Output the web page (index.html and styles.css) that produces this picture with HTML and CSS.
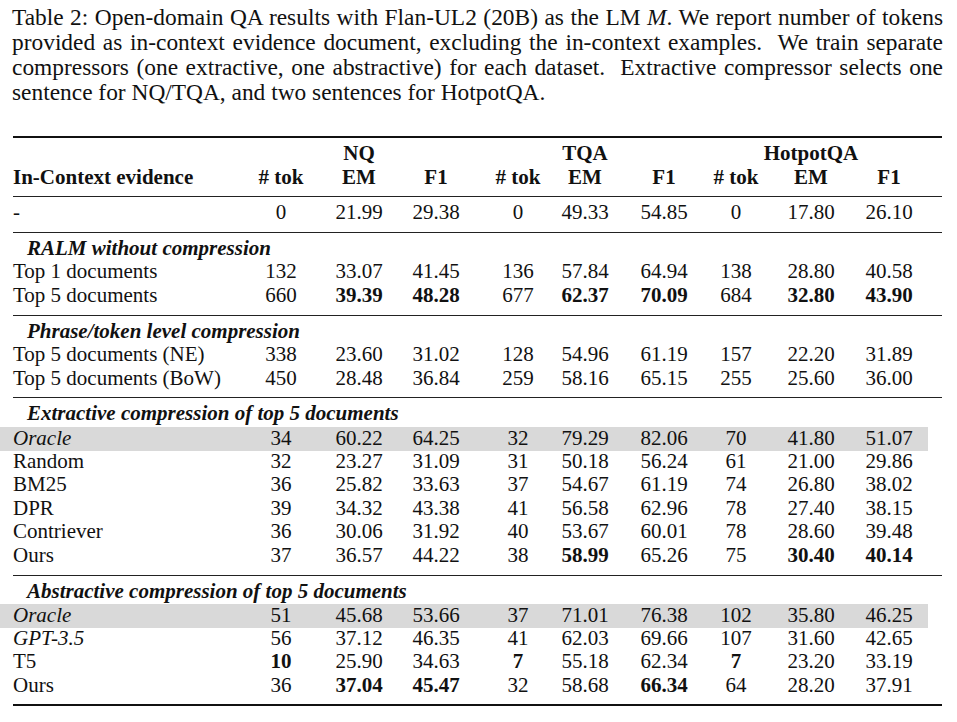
FILE: index.html
```html
<!DOCTYPE html>
<html lang="en">
<head>
    <meta charset="UTF-8">
    <title>Table 2: Open-domain QA results</title>
    <link rel="stylesheet" href="styles.css">
</head>
<body>
    <div class="page">
        <div class="caption">
            <div class="cap-line">Table 2: Open-domain QA results with Flan-UL2 (20B) as the LM <i>M</i>. We report number of tokens</div>
            <div class="cap-line">provided as in-context evidence document, excluding the in-context examples. &nbsp;We train separate</div>
            <div class="cap-line">compressors (one extractive, one abstractive) for each dataset. &nbsp;Extractive compressor selects one</div>
            <div class="cap-line last">sentence for NQ/TQA, and two sentences for HotpotQA.</div>
        </div>

        <div class="results">
            <div class="group head">
                <div class="row">
                    <span></span><span></span><span>NQ</span><span></span>
                    <span></span><span>TQA</span><span></span>
                    <span></span><span>HotpotQA</span><span></span>
                </div>
                <div class="row">
                    <span>In-Context evidence</span>
                    <span># tok</span><span>EM</span><span>F1</span>
                    <span># tok</span><span>EM</span><span>F1</span>
                    <span># tok</span><span>EM</span><span>F1</span>
                </div>
            </div>

            <div class="group">
                <div class="row">
                    <span>-</span>
                    <span>0</span><span>21.99</span><span>29.38</span>
                    <span>0</span><span>49.33</span><span>54.85</span>
                    <span>0</span><span>17.80</span><span>26.10</span>
                </div>
            </div>

            <div class="group">
                <div class="section-title">RALM without compression</div>
                <div class="row">
                    <span>Top 1 documents</span>
                    <span>132</span><span>33.07</span><span>41.45</span>
                    <span>136</span><span>57.84</span><span>64.94</span>
                    <span>138</span><span>28.80</span><span>40.58</span>
                </div>
                <div class="row">
                    <span>Top 5 documents</span>
                    <span>660</span><b>39.39</b><b>48.28</b>
                    <span>677</span><b>62.37</b><b>70.09</b>
                    <span>684</span><b>32.80</b><b>43.90</b>
                </div>
            </div>

            <div class="group">
                <div class="section-title">Phrase/token level compression</div>
                <div class="row">
                    <span>Top 5 documents (NE)</span>
                    <span>338</span><span>23.60</span><span>31.02</span>
                    <span>128</span><span>54.96</span><span>61.19</span>
                    <span>157</span><span>22.20</span><span>31.89</span>
                </div>
                <div class="row">
                    <span>Top 5 documents (BoW)</span>
                    <span>450</span><span>28.48</span><span>36.84</span>
                    <span>259</span><span>58.16</span><span>65.15</span>
                    <span>255</span><span>25.60</span><span>36.00</span>
                </div>
            </div>

            <div class="group">
                <div class="section-title">Extractive compression of top 5 documents</div>
                <div class="row oracle">
                    <i>Oracle</i>
                    <span>34</span><span>60.22</span><span>64.25</span>
                    <span>32</span><span>79.29</span><span>82.06</span>
                    <span>70</span><span>41.80</span><span>51.07</span>
                </div>
                <div class="row">
                    <span>Random</span>
                    <span>32</span><span>23.27</span><span>31.09</span>
                    <span>31</span><span>50.18</span><span>56.24</span>
                    <span>61</span><span>21.00</span><span>29.86</span>
                </div>
                <div class="row">
                    <span>BM25</span>
                    <span>36</span><span>25.82</span><span>33.63</span>
                    <span>37</span><span>54.67</span><span>61.19</span>
                    <span>74</span><span>26.80</span><span>38.02</span>
                </div>
                <div class="row">
                    <span>DPR</span>
                    <span>39</span><span>34.32</span><span>43.38</span>
                    <span>41</span><span>56.58</span><span>62.96</span>
                    <span>78</span><span>27.40</span><span>38.15</span>
                </div>
                <div class="row">
                    <span>Contriever</span>
                    <span>36</span><span>30.06</span><span>31.92</span>
                    <span>40</span><span>53.67</span><span>60.01</span>
                    <span>78</span><span>28.60</span><span>39.48</span>
                </div>
                <div class="row">
                    <span>Ours</span>
                    <span>37</span><span>36.57</span><span>44.22</span>
                    <span>38</span><b>58.99</b><span>65.26</span>
                    <span>75</span><b>30.40</b><b>40.14</b>
                </div>
            </div>

            <div class="group last">
                <div class="section-title">Abstractive compression of top 5 documents</div>
                <div class="row oracle">
                    <i>Oracle</i>
                    <span>51</span><span>45.68</span><span>53.66</span>
                    <span>37</span><span>71.01</span><span>76.38</span>
                    <span>102</span><span>35.80</span><span>46.25</span>
                </div>
                <div class="row">
                    <i>GPT-3.5</i>
                    <span>56</span><span>37.12</span><span>46.35</span>
                    <span>41</span><span>62.03</span><span>69.66</span>
                    <span>107</span><span>31.60</span><span>42.65</span>
                </div>
                <div class="row">
                    <span>T5</span>
                    <b>10</b><span>25.90</span><span>34.63</span>
                    <b>7</b><span>55.18</span><span>62.34</span>
                    <b>7</b><span>23.20</span><span>33.19</span>
                </div>
                <div class="row">
                    <span>Ours</span>
                    <span>36</span><b>37.04</b><b>45.47</b>
                    <span>32</span><span>58.68</span><b>66.34</b>
                    <span>64</span><span>28.20</span><span>37.91</span>
                </div>
            </div>
        </div>
    </div>
</body>
</html>
```

FILE: styles.css
```css
body {
    margin: 0;
    padding: 0;
    background: #fff;
    color: #111;
    font-family: 'Liberation Serif', 'Times New Roman', serif;
}

.page {
    width: 931px;
    padding: 5px 0 0 12px;
}

.caption {
    font-size: 23.4px;
    line-height: 25px;
}

.cap-line {
    text-align: justify;
    text-align-last: justify;
    white-space: nowrap;
}

.cap-line.last {
    text-align-last: left;
}

.results {
    width: 929px;
    margin: 31px 0 0 1px;
    border-top: 2px solid #111;
    font-size: 21px;
    line-height: 23.6px;
}

.group {
    padding: 4px 0 7px;
    border-bottom: 1px solid #222;
}

.group.last {
    border-bottom: 2px solid #111;
}

.row {
    display: grid;
    grid-template-columns: 218px 100px 56px 98px 66px 68px 90px 54px 96px 60px;
    padding-right: 23px;
    white-space: nowrap;
}

.row > * {
    text-align: center;
}

.row > :first-child {
    text-align: left;
}

.head .row {
    font-weight: bold;
}

.row.oracle {
    background: #d9d9d9;
    margin: 1px 14px -1px -13px;
    padding: 0 9px 0 13px;
}

.section-title {
    padding-left: 14px;
    font-weight: bold;
    font-style: italic;
}
```
